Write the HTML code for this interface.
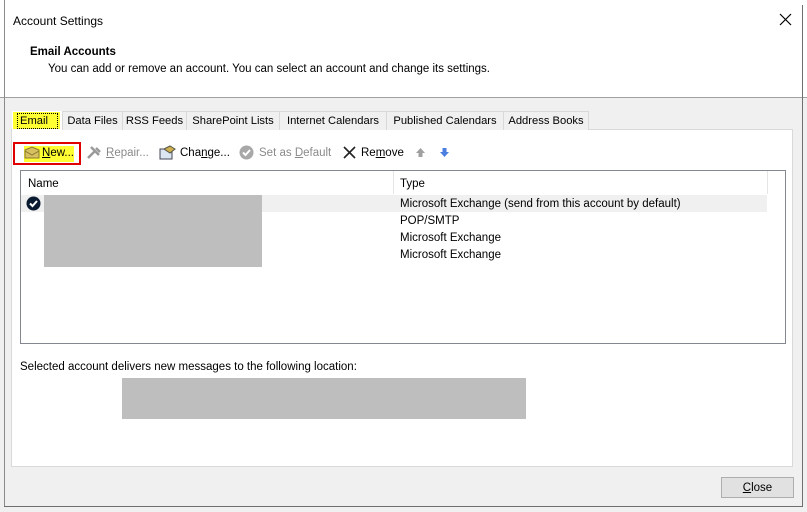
<!DOCTYPE html>
<html><head><style>
*{margin:0;padding:0;box-sizing:border-box}
body{width:807px;height:512px;background:#fff;font-family:"Liberation Sans",sans-serif;font-size:11.5px;color:#000;position:relative;overflow:hidden}
.a{position:absolute;white-space:nowrap}
.tab{position:absolute;top:111px;height:19px;border:1px solid #d9d9d9;border-bottom:none;background:#f0f0f0;text-align:center;line-height:19px;font-size:11.2px}
.g{color:#8a8a8a}
u{text-decoration:underline}
</style></head><body>
<div class="a" style="left:0;top:97px;width:807px;height:415px;background:#f0f0f0;border-top:1px solid #a0a0a0"></div>
<div class="a" style="left:4px;top:0;width:1px;height:507px;background:#8a8a8a"></div>
<div class="a" style="left:802px;top:5px;width:1px;height:502px;background:#6e6e6e"></div>
<div class="a" style="left:4px;top:506px;width:799px;height:1px;background:#6e6e6e"></div>
<div class="a" style="left:13px;top:14px;font-size:12px">Account Settings</div>
<svg class="a" style="left:779px;top:13px" width="13" height="13"><path d="M1 1L12 12M12 1L1 12" stroke="#000" stroke-width="1.2"/></svg>
<div class="a" style="left:30px;top:46px;font-weight:bold">Email Accounts</div>
<div class="a" style="left:48px;top:63px;font-size:11.5px">You can add or remove an account. You can select an account and change its settings.</div>

<div class="a" style="left:11px;top:129px;width:782px;height:338px;background:#fff;border:1px solid #d9d9d9"></div>
<div class="tab" style="left:12px;width:51px;height:20px;background:#fff;border:none"><div class="a" style="left:1px;top:1px;width:47px;height:17px;background:#ffff33"></div><div class="a" style="left:5px;top:2px;width:41px;height:16px;border:1px dotted #000;line-height:15px;text-align:left;padding-left:2px">Email</div></div>
<div class="tab" style="left:62px;width:61px">Data Files</div>
<div class="tab" style="left:122px;width:65px">RSS Feeds</div>
<div class="tab" style="left:186px;width:94px">SharePoint Lists</div>
<div class="tab" style="left:279px;width:108px">Internet Calendars</div>
<div class="tab" style="left:386px;width:118px">Published Calendars</div>
<div class="tab" style="left:503px;width:86px">Address Books</div>

<div class="a" style="left:13px;top:142px;width:68px;height:23px;border:2px solid #e00000"></div>
<div class="a" style="left:24px;top:146px;width:50px;height:16px;background:#ffff33"></div>
<svg class="a" style="left:23px;top:145px" width="18" height="16"><path d="M2 5L9 2L16 5V13H2Z" fill="#d8c060" stroke="#8a7a30"/><path d="M2 6L9 10L16 6" fill="none" stroke="#8a7a30"/></svg>
<div class="a" style="left:42px;top:147px"><u>N</u>ew...</div>
<svg class="a" style="left:86px;top:145px" width="16" height="15"><path d="M2 13L9 6M5 2L13 10M10 3L14 7" stroke="#9a9a9a" stroke-width="2.5"/></svg>
<div class="a g" style="left:106px;top:147px"><u>R</u>epair...</div>
<svg class="a" style="left:159px;top:145px" width="17" height="16"><rect x="1" y="4" width="12" height="10" fill="#dbe6f2" stroke="#445"/><path d="M5 4L11 1L16 4L11 8Z" fill="#d0b050" stroke="#554"/></svg>
<div class="a" style="left:180px;top:147px">Cha<u>n</u>ge...</div>
<svg class="a" style="left:239px;top:145px" width="15" height="15"><circle cx="7.5" cy="7.5" r="7" fill="#a8a8a8"/><path d="M4 7.5L6.5 10L11 5" stroke="#fff" stroke-width="2" fill="none"/></svg>
<div class="a g" style="left:259px;top:147px">Set as <u>D</u>efault</div>
<svg class="a" style="left:343px;top:146px" width="13" height="13"><path d="M1 1L12 12M12 1L1 12" stroke="#222" stroke-width="1.6"/></svg>
<div class="a" style="left:361px;top:147px">Re<u>m</u>ove</div>
<svg class="a" style="left:415px;top:147px" width="11" height="11"><path d="M5.5 1L10 6H7.5V10H3.5V6H1Z" fill="#a0a0a0"/></svg>
<svg class="a" style="left:439px;top:147px" width="11" height="11"><path d="M5.5 10L10 5H7.5V1H3.5V5H1Z" fill="#4a7fe0"/></svg>

<div class="a" style="left:20px;top:170px;width:766px;height:174px;border:1px solid #828790;background:#fff"></div>
<div class="a" style="left:393px;top:171px;width:1px;height:23px;background:#e5e5e5"></div>
<div class="a" style="left:767px;top:171px;width:1px;height:23px;background:#e5e5e5"></div>
<div class="a" style="left:28px;top:178px">Name</div>
<div class="a" style="left:400px;top:178px">Type</div>
<div class="a" style="left:21px;top:195px;width:746px;height:17px;background:#f0f0f0"></div>
<svg class="a" style="left:26px;top:196px" width="15" height="15"><circle cx="7.5" cy="7.5" r="7" fill="#0a1a30"/><path d="M4 7.5L6.5 10L11 5" stroke="#fff" stroke-width="2" fill="none"/></svg>
<div class="a" style="left:44px;top:195px;width:218px;height:72px;background:#bebebe"></div>
<div class="a" style="left:400px;top:198px">Microsoft Exchange (send from this account by default)</div>
<div class="a" style="left:400px;top:215px">POP/SMTP</div>
<div class="a" style="left:400px;top:232px">Microsoft Exchange</div>
<div class="a" style="left:400px;top:249px">Microsoft Exchange</div>

<div class="a" style="left:20px;top:361px">Selected account delivers new messages to the following location:</div>
<div class="a" style="left:122px;top:378px;width:404px;height:41px;background:#bebebe"></div>

<div class="a" style="left:721px;top:477px;width:73px;height:21px;background:#e1e1e1;border:1px solid #adadad;text-align:center;line-height:21px"><u>C</u>lose</div>
</body></html>
